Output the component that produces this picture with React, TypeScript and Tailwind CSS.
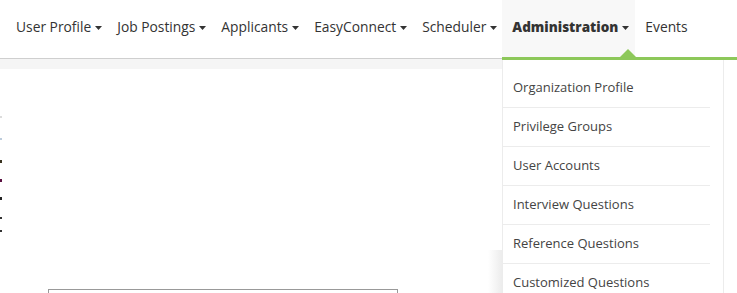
import React from "react";

const Caret = () => (
  <svg width="7" height="4" viewBox="0 0 7 4" className="ml-[4px] mt-[2px]">
    <path d="M0 0 L7 0 L3.5 4 Z" fill="currentColor" />
  </svg>
);

const navItems: { label: string; caret: boolean; active?: boolean }[] = [
  { label: "User Profile", caret: true },
  { label: "Job Postings", caret: true },
  { label: "Applicants", caret: true },
  { label: "EasyConnect", caret: true },
  { label: "Scheduler", caret: true },
  { label: "Administration", caret: true, active: true },
  { label: "Events", caret: false },
];

const menu = [
  "Organization Profile",
  "Privilege Groups",
  "User Accounts",
  "Interview Questions",
  "Reference Questions",
  "Customized Questions",
];

export default function App() {
  return (
    <div
      className="relative w-[737px] h-[293px] overflow-hidden bg-white"
      style={{ fontFamily: '"Open Sans", sans-serif' }}
    >
      <nav className="flex h-[57px] items-stretch pl-[6px] text-[13.8px] text-[#333]">
        {navItems.map((it) => (
          <div
            key={it.label}
            className={
              it.active
                ? "relative flex items-center pl-[10px] pr-[6px] pb-[3px] bg-[#f8f8f8] font-extrabold text-[13.5px] text-[#333]"
                : "flex items-center pl-[10px] pr-[5px] pb-[3px]"
            }
          >
            <span>{it.label}</span>
            {it.caret && <Caret />}
            {it.active && (
              <svg
                width="16"
                height="8"
                viewBox="0 0 16 8"
                className="absolute bottom-0 right-[-1px]"
              >
                <path d="M0 8 L8 0 L16 8 Z" fill="#8dc85a" />
              </svg>
            )}
          </div>
        ))}
      </nav>
      <div className="flex">
        <div className="w-[502px]">
          <div className="h-[1px] mt-[1px] bg-[#cfcfcf]" />
          <div className="h-[10px] bg-[#f5f5f5]" />
        </div>
        <div className="flex-1 h-[3px] bg-[#8dc85a]" />
      </div>
      <div className="flex flex-col mt-[47px] w-[2px]">
        <div className="h-[2px] w-[2px] bg-[#dcdcdc]" />
        <div className="h-[2px] w-[2px] mt-[20px] bg-[#bccbdb]" />
        <div className="h-[3px] w-[2px] mt-[20px] bg-[#3a3320]" />
        <div className="h-[3px] w-[2px] mt-[16px] bg-[#5a1040]" />
        <div className="h-[3px] w-[2px] mt-[15px] bg-[#222]" />
        <div className="h-[2px] w-[2px] mt-[17px] bg-[#333]" />
        <div className="h-[2px] w-[2px] mt-[11px] bg-[#333]" />
      </div>
      <div className="absolute left-[48px] top-[289px] w-[350px] h-[10px] border border-[#999]" />
      <div className="absolute left-[488px] top-[250px] w-[14px] h-[50px] bg-gradient-to-r from-white to-[#ececec]" />
      <div className="absolute left-[502px] top-[60px] w-[222px] h-[240px] bg-white border-l border-r border-[#ececec] pt-[9px] pr-[13px] text-[13px] text-[#444]">
        {menu.map((m) => (
          <div
            key={m}
            className="h-[39px] flex items-center pl-[10px] border-b border-[#ececec]"
          >
            {m}
          </div>
        ))}
      </div>
    </div>
  );
}
